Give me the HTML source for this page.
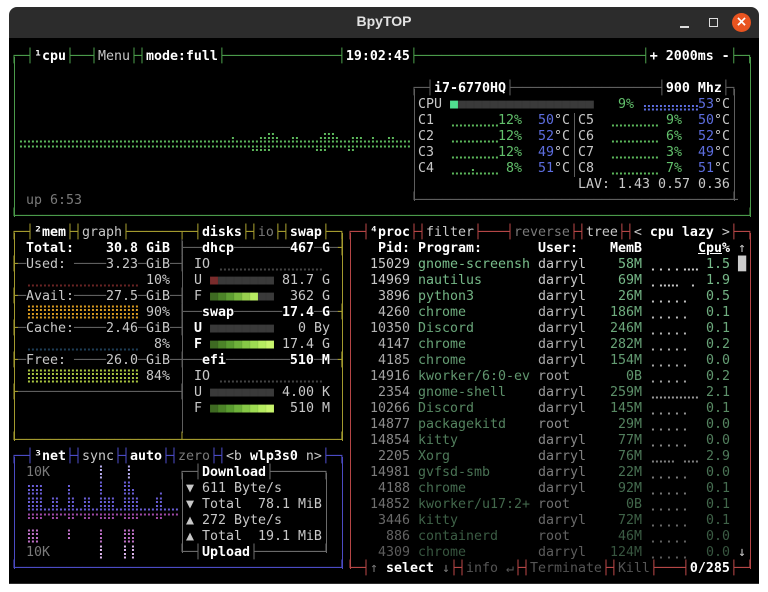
<!DOCTYPE html>
<html><head><meta charset="utf-8"><style>
*{margin:0;padding:0;box-sizing:border-box}
html,body{width:768px;height:592px;background:#fff;overflow:hidden}
#win{position:absolute;left:9px;top:7px;width:750px;height:577px;background:#2c2c2c;border-radius:8px 8px 0 0}
#title{position:absolute;left:0;width:768px;top:13px;text-align:center;font:bold 14px "Liberation Sans",sans-serif;color:#e2e2e2}
#term{position:absolute;left:9px;top:38px;width:750px;height:545px;background:#000}
#wrap{position:absolute;left:0;top:2px;width:768px;height:590px}
.row{position:absolute;left:10px;width:744px;height:16px;font-family:"DejaVu Sans Mono","Liberation Mono",monospace;font-size:13.29px;line-height:16px;color:#c8c8c8}
.a{position:absolute;top:0;white-space:pre}
i{display:inline-block;width:8px;font-style:normal;text-align:left}
.v{position:absolute;width:1px}
.g{color:#4a9a4a}.y{color:#a39a2e}.r{color:#b54646}.b{color:#4b4bc4}.k{color:#5e5e5e}
.w{color:#fff;font-weight:bold}.t{color:#c8c8c8}.d{color:#7a7a7a}.dd{color:#555}
.gn{color:#62c06c}.bl{color:#5d6ee0}.gr{color:#5cb85c}
.pid{position:absolute;left:344px;width:56px;text-align:right;color:var(--p)}
.prg{position:absolute;left:408px;color:var(--g)}
.usr{position:absolute;left:528px;color:var(--p)}
.mem{position:absolute;left:592px;width:40px;text-align:right;color:var(--g)}
.cg{position:absolute;left:640px;color:var(--p);white-space:pre}
.cpu{position:absolute;left:696px;width:24px;text-align:right;color:var(--g)}
</style></head><body>
<div id="win"></div>
<div id="title">BpyTOP</div>
<div style="position:absolute;left:680px;top:26px;width:9px;height:2px;background:#ddd"></div>
<div style="position:absolute;left:709px;top:18px;width:9px;height:9px;border:1.5px solid #ddd"></div>
<div style="position:absolute;left:732px;top:13px;width:19px;height:19px;border-radius:50%;background:#e95420;color:#fff;font:bold 14px 'DejaVu Sans',sans-serif;text-align:center;line-height:19px">×</div>
<div id="term"></div>
<div id="wrap">
<div class="v" style="left:13.5px;top:55px;height:160px;background:#4a9a4a"></div>
<div class="v" style="left:749.5px;top:55px;height:160px;background:#4a9a4a"></div>
<div class="v" style="left:413.5px;top:87px;height:112px;background:#5e5e5e"></div>
<div class="v" style="left:733.5px;top:87px;height:112px;background:#5e5e5e"></div>
<div class="v" style="left:573.5px;top:111px;height:64px;background:#5e5e5e"></div>
<div class="v" style="left:13.5px;top:231px;height:208px;background:#a39a2e"></div>
<div class="v" style="left:181.5px;top:239px;height:192px;background:#5e5e5e"></div>
<div class="v" style="left:341.5px;top:231px;height:208px;background:#a39a2e"></div>
<div class="v" style="left:349.5px;top:231px;height:336px;background:#b54646"></div>
<div class="v" style="left:749.5px;top:231px;height:336px;background:#b54646"></div>
<div class="v" style="left:13.5px;top:455px;height:112px;background:#4b4bc4"></div>
<div class="v" style="left:341.5px;top:455px;height:112px;background:#4b4bc4"></div>
<div class="v" style="left:181.5px;top:471px;height:80px;background:#6a6a6a"></div>
<div class="v" style="left:325.5px;top:471px;height:80px;background:#6a6a6a"></div>

<div class="row" style="top:47px"><span class="a" style="left:0"><span class="g">┌─┤</span><span class="w">¹cpu</span><span class="g">├──┤</span><span class="t">Menu</span><span class="g">├┤</span><span class="w">mode:full</span><span class="g">├──────────────┤</span><span class="w">19:02:45</span><span class="g">├────────────────────────────┤</span><span class="w">+ 2000ms -</span><span class="g">├─┐</span></span></div>
<div class="row" style="top:79px"><span class="a k" style="left:400px">┌─┤<span class="w">i7-6770HQ</span>├──────────────────┤<span class="w">900 Mhz</span>├┐</span></div>
<div class="row" style="top:95px"><span class="a t" style="left:408px">CPU</span><span class="a" style="left:440px"><span style="color:#50e090">■</span><span style="color:#3a3a3a">■■■■■■■■■■■■■■■■■</span></span><span class="a gn" style="left:608px">9%</span><span class="a bl" style="left:632px"><i>⣤</i><i>⣤</i><i>⣤</i><i>⣤</i><i>⣤</i><i>⣤</i><i>⣤</i></span><span class="a" style="left:688px"><span class="bl">53</span><span class="t">°C</span></span></div>

<div class="row" style="top:111px"><span class="a t" style="left:408px">C1</span><span class="a gr" style="left:440px"><i>⣀</i><i>⣀</i><i>⣀</i><i>⣀</i><i>⣀</i><i>⣀</i></span><span class="a" style="left:488px"><span class="gn">12%</span>  <span class="bl">50</span>°C</span><span class="a t" style="left:568px">C5</span><span class="a gr" style="left:600px"><i>⣀</i><i>⣀</i><i>⣀</i><i>⣀</i><i>⣀</i><i>⣀</i></span><span class="a" style="left:648px"><span class="gn"> 9%</span>  <span class="bl">50</span>°C</span></div>
<div class="row" style="top:127px"><span class="a gr" style="left:8px"><i>⣀</i><i>⣀</i><i>⣀</i><i>⣀</i><i>⣀</i><i>⣀</i><i>⣀</i><i>⣀</i><i>⣀</i><i>⣀</i><i>⣀</i><i>⣀</i><i>⣀</i><i>⣀</i><i>⣀</i><i>⣀</i><i>⣀</i><i>⣀</i><i>⣀</i><i>⣀</i><i>⣀</i><i>⣀</i><i>⣀</i><i>⣀</i><i>⣀</i><i>⣀</i><i>⣠</i><i>⣀</i><i>⣀</i><i>⣀</i><i>⣤</i><i>⣶</i><i>⣄</i><i>⣀</i><i>⣤</i><i>⣀</i><i>⣀</i><i>⣠</i><i>⣶</i><i>⣦</i><i>⣀</i><i>⣠</i><i>⣤</i><i>⣀</i><i>⣄</i><i>⣀</i><i>⣤</i><i>⣀</i><i>⣀</i></span><span class="a t" style="left:408px">C2</span><span class="a gr" style="left:440px"><i>⣀</i><i>⣀</i><i>⣀</i><i>⣀</i><i>⣀</i><i>⣀</i></span><span class="a" style="left:488px"><span class="gn">12%</span>  <span class="bl">52</span>°C</span><span class="a t" style="left:568px">C6</span><span class="a gr" style="left:600px"><i>⣀</i><i>⣀</i><i>⣀</i><i>⣀</i><i>⣀</i><i>⣀</i></span><span class="a" style="left:648px"><span class="gn"> 6%</span>  <span class="bl">52</span>°C</span></div>
<div class="row" style="top:143px"><span class="a gr" style="left:8px"><i>⠉</i><i>⠉</i><i>⠉</i><i>⠉</i><i>⠉</i><i>⠉</i><i>⠉</i><i>⠉</i><i>⠉</i><i>⠉</i><i>⠉</i><i>⠉</i><i>⠉</i><i>⠉</i><i>⠉</i><i>⠉</i><i>⠉</i><i>⠉</i><i>⠉</i><i>⠉</i><i>⠉</i><i>⠉</i><i>⠉</i><i>⠉</i><i>⠉</i><i>⠉</i><i>⠉</i><i>⠉</i><i>⠉</i><i>⠛</i><i>⠛</i><i>⠋</i><i>⠉</i><i>⠉</i><i>⠉</i><i>⠉</i><i>⠉</i><i>⠛</i><i>⠋</i><i>⠉</i><i>⠉</i><i>⠛</i><i>⠉</i><i>⠉</i><i>⠉</i><i>⠉</i><i>⠉</i><i>⠉</i><i>⠉</i></span><span class="a t" style="left:408px">C3</span><span class="a gr" style="left:440px"><i>⣀</i><i>⣀</i><i>⣀</i><i>⣀</i><i>⣀</i><i>⣀</i></span><span class="a" style="left:488px"><span class="gn">12%</span>  <span class="bl">49</span>°C</span><span class="a t" style="left:568px">C7</span><span class="a gr" style="left:600px"><i>⣀</i><i>⣀</i><i>⣀</i><i>⣀</i><i>⣀</i><i>⣀</i></span><span class="a" style="left:648px"><span class="gn"> 3%</span>  <span class="bl">49</span>°C</span></div>
<div class="row" style="top:159px"><span class="a t" style="left:408px">C4</span><span class="a gr" style="left:440px"><i>⣀</i><i>⣀</i><i>⣠</i><i>⣀</i><i>⣀</i><i>⣀</i></span><span class="a" style="left:488px"><span class="gn"> 8%</span>  <span class="bl">51</span>°C</span><span class="a t" style="left:568px">C8</span><span class="a gr" style="left:600px"><i>⣀</i><i>⣀</i><i>⣀</i><i>⣀</i><i>⣀</i><i>⣀</i></span><span class="a" style="left:648px"><span class="gn"> 7%</span>  <span class="bl">51</span>°C</span></div>
<div class="row" style="top:175px"><span class="a t" style="left:568px">LAV: 1.43 0.57 0.36</span></div>
<div class="row" style="top:191px"><span class="a d" style="left:16px">up 6:53</span><span class="a k" style="left:400px">└</span><span class="a k" style="left:408px;width:320px;overflow:hidden">────────────────────────────────────────────────</span><span class="a k" style="left:720px">┘</span></div>
<div class="row" style="top:207px"><span class="a g" style="left:0">└</span><span class="a g" style="left:8px;width:728px;overflow:hidden">────────────────────────────────────────────────────────────────────────────────────────────────────────</span><span class="a g" style="left:736px">┘</span></div>

<div class="row" style="top:223px"><span class="a" style="left:0"><span class="y">┌─┤</span><span class="w">²mem</span><span class="y">├┤</span><span class="t">graph</span><span class="y">├──────┬─┤</span><span class="w">disks</span><span class="y">├┤</span><span class="d">io</span><span class="y">├┤</span><span class="w">swap</span><span class="y">├─┐</span></span><span class="a" style="left:336px"><span class="r">┌─┤</span><span class="w">⁴proc</span><span class="r">├┤</span><span class="t">filter</span><span class="r">├───┤</span><span class="d">reverse</span><span class="r">├┤</span><span class="t">tree</span><span class="r">├┤</span><span class="t">&lt; </span><span class="w">cpu lazy</span><span class="t"> &gt;</span><span class="r">├─┐</span></span></div>
<div class="row" style="top:239px"><span class="a w" style="left:16px">Total:</span><span class="a w" style="left:96px">30.8 GiB</span><span class="a" style="left:168px"><span class="k">├──</span><span class="w">dhcp</span><span class="k">───────</span><span class="w">467</span><span class="k">─</span><span class="w">G</span><span class="k">─</span><span class="y">┤</span></span><span class="a w" style="left:368px">Pid: Program:</span><span class="a w" style="left:528px">User:</span><span class="a w" style="left:600px">MemB</span><span class="a w" style="left:688px"><u>Cpu</u>%</span><span class="a t" style="left:728px">↑</span></div>
<div class="row" style="top:255px"><span class="a" style="left:0"><span class="y">├</span><span class="k">─</span><span class="t">Used: </span><span class="k">────</span><span class="t">3.23</span><span class="k">─</span><span class="t">GiB</span><span class="k">─┤</span></span><span class="a t" style="left:184px">IO</span><span class="a" style="left:208px;color:#444"><i>⣀</i><i>⣀</i><i>⣀</i><i>⣀</i><i>⣀</i><i>⣀</i><i>⣀</i><i>⣀</i><i>⣀</i><i>⣀</i><i>⣀</i><i>⣀</i><i>⣀</i></span></div>
<div class="row" style="top:271px"><span class="a" style="left:16px;color:#6a2424"><i>⣀</i><i>⣀</i><i>⣀</i><i>⣀</i><i>⣀</i><i>⣀</i><i>⣀</i><i>⣀</i><i>⣀</i><i>⣀</i><i>⣀</i><i>⣀</i><i>⣀</i><i>⣀</i></span><span class="a t" style="left:136px">10%</span><span class="a t" style="left:184px">U</span><span class="a" style="left:200px"><span style="color:#7a2c2c">■</span><span style="color:#3a3a3a">■■■■■■■</span></span><span class="a t" style="left:272px">81.7 G</span></div>
<div class="row" style="top:287px"><span class="a" style="left:0"><span class="y">├</span><span class="k">─</span><span class="t">Avail:</span><span class="k">────</span><span class="t">27.5</span><span class="k">─</span><span class="t">GiB</span><span class="k">─┤</span></span><span class="a t" style="left:184px">F</span><span class="a" style="left:200px"><span style="color:#3e6a22">■</span><span style="color:#4c8428">■</span><span style="color:#5e9e32">■</span><span style="color:#78b83e">■</span><span style="color:#98d04e">■</span><span style="color:#b8ec62">■</span><span style="color:#3a3a3a">■■</span></span><span class="a t" style="left:280px">362 G</span></div>
<div class="row" style="top:303px"><span class="a" style="left:16px;color:#d89a20"><i>⣿</i><i>⣿</i><i>⣿</i><i>⣿</i><i>⣿</i><i>⣿</i><i>⣿</i><i>⣿</i><i>⣿</i><i>⣿</i><i>⣿</i><i>⣿</i><i>⣿</i><i>⣿</i></span><span class="a t" style="left:136px">90%</span><span class="a" style="left:168px"><span class="k">├──</span><span class="w">swap</span><span class="k">──────</span><span class="w">17.4</span><span class="k">─</span><span class="w">G</span><span class="k">─</span><span class="y">┤</span></span></div>
<div class="row" style="top:319px"><span class="a" style="left:0"><span class="y">├</span><span class="k">─</span><span class="t">Cache:</span><span class="k">────</span><span class="t">2.46</span><span class="k">─</span><span class="t">GiB</span><span class="k">─┤</span></span><span class="a w" style="left:184px">U</span><span class="a" style="left:200px;color:#3a3a3a">■■■■■■■■</span><span class="a t" style="left:288px">0 By</span></div>
<div class="row" style="top:335px"><span class="a" style="left:16px;color:#1e3e58"><i>⣀</i><i>⣀</i><i>⣀</i><i>⣀</i><i>⣀</i><i>⣀</i><i>⣀</i><i>⣀</i><i>⣀</i><i>⣀</i><i>⣀</i><i>⣀</i><i>⣀</i><i>⣀</i></span><span class="a t" style="left:144px">8%</span><span class="a w" style="left:184px">F</span><span class="a" style="left:200px"><span style="color:#3e6a22">■</span><span style="color:#4c8428">■</span><span style="color:#5a9c30">■</span><span style="color:#6eb23a">■</span><span style="color:#86c846">■</span><span style="color:#9edc52">■</span><span style="color:#b6ec60">■</span><span style="color:#c8f46c">■</span></span><span class="a t" style="left:272px">17.4 G</span></div>
<div class="row" style="top:351px"><span class="a" style="left:0"><span class="y">├</span><span class="k">─</span><span class="t">Free: </span><span class="k">────</span><span class="t">26.0</span><span class="k">─</span><span class="t">GiB</span><span class="k">─┼──</span><span class="w">efi</span><span class="k">────────</span><span class="w">510</span><span class="k">─</span><span class="w">M</span><span class="k">─</span><span class="y">┤</span></span></div>
<div class="row" style="top:367px"><span class="a" style="left:16px;color:#a8c440"><i>⣿</i><i>⣿</i><i>⣿</i><i>⣿</i><i>⣿</i><i>⣿</i><i>⣿</i><i>⣿</i><i>⣿</i><i>⣿</i><i>⣿</i><i>⣿</i><i>⣿</i><i>⣿</i></span><span class="a t" style="left:136px">84%</span><span class="a t" style="left:184px">IO</span><span class="a" style="left:208px;color:#444"><i>⣀</i><i>⣀</i><i>⣀</i><i>⣀</i><i>⣀</i><i>⣀</i><i>⣀</i><i>⣀</i><i>⣀</i><i>⣀</i><i>⣀</i><i>⣀</i><i>⣀</i></span></div>
<div class="row" style="top:383px"><span class="a" style="left:0"><span class="y">├</span><span class="k">────────────────────┤</span></span><span class="a t" style="left:184px">U</span><span class="a" style="left:200px;color:#3a3a3a">■■■■■■■■</span><span class="a t" style="left:272px">4.00 K</span></div>
<div class="row" style="top:399px"><span class="a t" style="left:184px">F</span><span class="a" style="left:200px"><span style="color:#3e6a22">■</span><span style="color:#4c8428">■</span><span style="color:#5a9c30">■</span><span style="color:#6eb23a">■</span><span style="color:#86c846">■</span><span style="color:#9edc52">■</span><span style="color:#b6ec60">■</span><span style="color:#c8f46c">■</span></span><span class="a t" style="left:280px">510 M</span></div>
<div class="row" style="top:431px"><span class="a y" style="left:0">└────────────────────┴───────────────────┘</span></div>

<div class="row" style="top:447px"><span class="a" style="left:0"><span class="b">┌─┤</span><span class="w">³net</span><span class="b">├┤</span><span class="t">sync</span><span class="b">├┤</span><span class="w">auto</span><span class="b">├┤</span><span class="d">zero</span><span class="b">├┤</span><span class="t">&lt;b </span><span class="w">wlp3s0</span><span class="t"> n&gt;</span><span class="b">├─┐</span></span></div>
<div class="row" style="top:463px"><span class="a d" style="left:16px">10K</span><span class="a" style="left:88px;color:#b8aef0"><i>⡇</i></span><span class="a" style="left:112px;color:#b8aef0"><i>⢸</i></span><span class="a" style="left:168px"><span style="color:#6a6a6a">┌─┤</span><span class="w">Download</span><span style="color:#6a6a6a">├──────┐</span></span></div>
<div class="row" style="top:479px"><span class="a" style="left:16px;color:#6a5ed8"><i>⣶</i><i>⣶</i><i> </i><i> </i><i> </i><i>⡆</i><i> </i><i> </i><i> </i><i>⡇</i><i> </i><i> </i><i>⣿</i><i>⡄</i><i> </i><i> </i><i>⢀</i></span><span class="a t" style="left:176px">▼ 611 Byte/s</span></div>
<div class="row" style="top:495px"><span class="a" style="left:16px;color:#6a5ed8"><i>⣿</i><i>⣿</i><i>⣀</i><i>⣿</i><i>⣀</i><i>⣿</i><i>⣀</i><i>⣿</i><i>⣀</i><i>⣿</i><i>⣿</i><i>⣀</i><i>⣿</i><i>⣿</i><i>⣀</i><i>⣀</i><i>⣿</i><i>⣀</i><i>⣀</i></span><span class="a t" style="left:176px">▼ Total  78.1 MiB</span></div>
<div class="row" style="top:511px"><span class="a" style="left:16px;color:#a04aa8"><i>⠛</i><i>⠛</i><i>⠉</i><i>⠛</i><i>⠉</i><i>⠛</i><i>⠉</i><i>⠛</i><i>⠉</i><i>⠛</i><i>⠛</i><i>⠉</i><i>⠛</i><i>⠛</i><i>⠉</i><i>⠉</i><i>⠛</i><i>⠉</i><i>⠉</i></span><span class="a t" style="left:176px">▲ 272 Byte/s</span></div>
<div class="row" style="top:527px"><span class="a" style="left:16px;color:#c070c8"><i>⣿</i><i>⡇</i><i> </i><i> </i><i> </i><i>⠇</i><i> </i><i> </i><i> </i><i>⡇</i><i> </i><i> </i><i>⣿</i><i>⡇</i></span><span class="a t" style="left:176px">▲ Total  19.1 MiB</span></div>
<div class="row" style="top:543px"><span class="a d" style="left:16px">10K</span><span class="a" style="left:88px;color:#e0b8f0"><i>⡇</i></span><span class="a" style="left:112px;color:#e0b8f0"><i>⡇</i><i>⡇</i></span><span class="a" style="left:168px"><span style="color:#6a6a6a">└─┤</span><span class="w">Upload</span><span style="color:#6a6a6a">├────────┘</span></span></div>
<div class="row" style="top:559px"><span class="a b" style="left:0">└────────────────────────────────────────┘</span><span class="a" style="left:336px"><span class="r">└─┤</span><span class="d">↑ </span><span class="w">select</span><span class="d"> ↓</span><span class="r">├┤</span><span class="dd">info <i>↵</i></span><span class="r">├┤</span><span class="dd">Terminate</span><span class="r">├┤</span><span class="dd">Kill</span><span class="r">├───┤</span><span class="w">0/285</span><span class="r">├─┘</span></span></div>

<div class="row" style="top:255px;--p:#cdcdcd;--g:#7abe8c"><span class="pid">15029</span><span class="prg">gnome-screensh</span><span class="usr">darryl</span><span class="mem">58M</span><span class="cg"><i>⡀</i><i>⡀</i><i>⡀</i><i>⡀</i><i>⣀</i><i>⣀</i></span><span class="cpu">1.5</span><span class="a" style="left:728px;color:#ccc">█</span></div>
<div class="row" style="top:271px;--p:#c7c7c7;--g:#76b888"><span class="pid">14969</span><span class="prg">nautilus</span><span class="usr">darryl</span><span class="mem">69M</span><span class="cg"><i>⡀</i><i>⣀</i><i>⣀</i><i>⡀</i><i> </i><i>⡀</i></span><span class="cpu">1.9</span></div>
<div class="row" style="top:287px;--p:#c1c1c1;--g:#73b384"><span class="pid">3896</span><span class="prg">python3</span><span class="usr">darryl</span><span class="mem">26M</span><span class="cg"><i>⡀</i><i>⡀</i><i>⡀</i><i>⡀</i><i>⡀</i></span><span class="cpu">0.5</span></div>
<div class="row" style="top:303px;--p:#bababa;--g:#6fad7f"><span class="pid">4260</span><span class="prg">chrome</span><span class="usr">darryl</span><span class="mem">186M</span><span class="cg"><i>⡀</i><i>⡀</i><i>⡀</i><i>⡀</i><i>⡀</i></span><span class="cpu">0.1</span></div>
<div class="row" style="top:319px;--p:#b4b4b4;--g:#6ba77b"><span class="pid">10350</span><span class="prg">Discord</span><span class="usr">darryl</span><span class="mem">246M</span><span class="cg"><i>⡀</i><i>⡀</i><i>⡀</i><i>⡀</i><i>⡀</i></span><span class="cpu">0.1</span></div>
<div class="row" style="top:335px;--p:#aeaeae;--g:#68a277"><span class="pid">4147</span><span class="prg">chrome</span><span class="usr">darryl</span><span class="mem">282M</span><span class="cg"><i>⡀</i><i>⡀</i><i>⡀</i><i>⡀</i><i>⡀</i></span><span class="cpu">0.2</span></div>
<div class="row" style="top:351px;--p:#a8a8a8;--g:#649c73"><span class="pid">4185</span><span class="prg">chrome</span><span class="usr">darryl</span><span class="mem">154M</span><span class="cg"><i>⡀</i><i>⡀</i><i>⡀</i><i>⡀</i><i>⡀</i></span><span class="cpu">0.0</span></div>
<div class="row" style="top:367px;--p:#a2a2a2;--g:#60966e"><span class="pid">14916</span><span class="prg">kworker/6:0-ev</span><span class="usr">root</span><span class="mem">0B</span><span class="cg"><i>⡀</i><i>⡀</i><i>⡀</i><i>⡀</i><i>⡀</i></span><span class="cpu">0.2</span></div>
<div class="row" style="top:383px;--p:#9c9c9c;--g:#5d906a"><span class="pid">2354</span><span class="prg">gnome-shell</span><span class="usr">darryl</span><span class="mem">259M</span><span class="cg"><i>⣀</i><i>⣀</i><i>⣀</i><i>⣀</i><i>⣀</i><i>⣀</i></span><span class="cpu">2.1</span></div>
<div class="row" style="top:399px;--p:#949494;--g:#588963"><span class="pid">10266</span><span class="prg">Discord</span><span class="usr">darryl</span><span class="mem">145M</span><span class="cg"><i>⡀</i><i>⡀</i><i>⡀</i><i>⡀</i><i>⡀</i></span><span class="cpu">0.1</span></div>
<div class="row" style="top:415px;--p:#8d8d8d;--g:#54835f"><span class="pid">14877</span><span class="prg">packagekitd</span><span class="usr">root</span><span class="mem">29M</span><span class="cg"><i>⡀</i><i>⡀</i><i>⡀</i><i>⡀</i><i>⡀</i></span><span class="cpu">0.0</span></div>
<div class="row" style="top:431px;--p:#878787;--g:#517d5c"><span class="pid">14854</span><span class="prg">kitty</span><span class="usr">darryl</span><span class="mem">77M</span><span class="cg"><i>⡀</i><i>⡀</i><i>⡀</i><i>⡀</i><i>⡀</i></span><span class="cpu">0.0</span></div>
<div class="row" style="top:447px;--p:#818181;--g:#4d7858"><span class="pid">2205</span><span class="prg">Xorg</span><span class="usr">darryl</span><span class="mem">76M</span><span class="cg"><i>⣀</i><i>⣀</i><i>⣀</i><i> </i><i>⣀</i><i>⣀</i></span><span class="cpu">2.9</span></div>
<div class="row" style="top:463px;--p:#7b7b7b;--g:#497254"><span class="pid">14981</span><span class="prg">gvfsd-smb</span><span class="usr">darryl</span><span class="mem">22M</span><span class="cg"><i>⡀</i><i>⡀</i><i>⡀</i><i>⡀</i><i>⡀</i></span><span class="cpu">0.0</span></div>
<div class="row" style="top:479px;--p:#757575;--g:#456c50"><span class="pid">4188</span><span class="prg">chrome</span><span class="usr">darryl</span><span class="mem">92M</span><span class="cg"><i>⡀</i><i>⡀</i><i>⡀</i><i>⡀</i><i>⡀</i></span><span class="cpu">0.1</span></div>
<div class="row" style="top:495px;--p:#6f6f6f;--g:#42674b"><span class="pid">14852</span><span class="prg">kworker/u17:2+</span><span class="usr">root</span><span class="mem">0B</span><span class="cg"><i>⡀</i><i>⡀</i><i>⡀</i><i>⡀</i><i>⡀</i></span><span class="cpu">0.1</span></div>
<div class="row" style="top:511px;--p:#696969;--g:#3e6147"><span class="pid">3446</span><span class="prg">kitty</span><span class="usr">darryl</span><span class="mem">72M</span><span class="cg"><i>⡀</i><i>⡀</i><i>⡀</i><i>⡀</i><i>⡀</i></span><span class="cpu">0.1</span></div>
<div class="row" style="top:527px;--p:#626262;--g:#3a5b43"><span class="pid">886</span><span class="prg">containerd</span><span class="usr">root</span><span class="mem">46M</span><span class="cg"><i>⡀</i><i>⡀</i><i>⡀</i><i>⡀</i><i>⡀</i></span><span class="cpu">0.0</span></div>
<div class="row" style="top:543px;--p:#5c5c5c;--g:#37553f"><span class="pid">4309</span><span class="prg">chrome</span><span class="usr">darryl</span><span class="mem">124M</span><span class="cg"><i>⡀</i><i>⡀</i><i>⡀</i><i>⡀</i><i>⡀</i></span><span class="cpu">0.0</span><span class="a" style="left:728px;color:#ccc">↓</span></div>
</div>
</body></html>
